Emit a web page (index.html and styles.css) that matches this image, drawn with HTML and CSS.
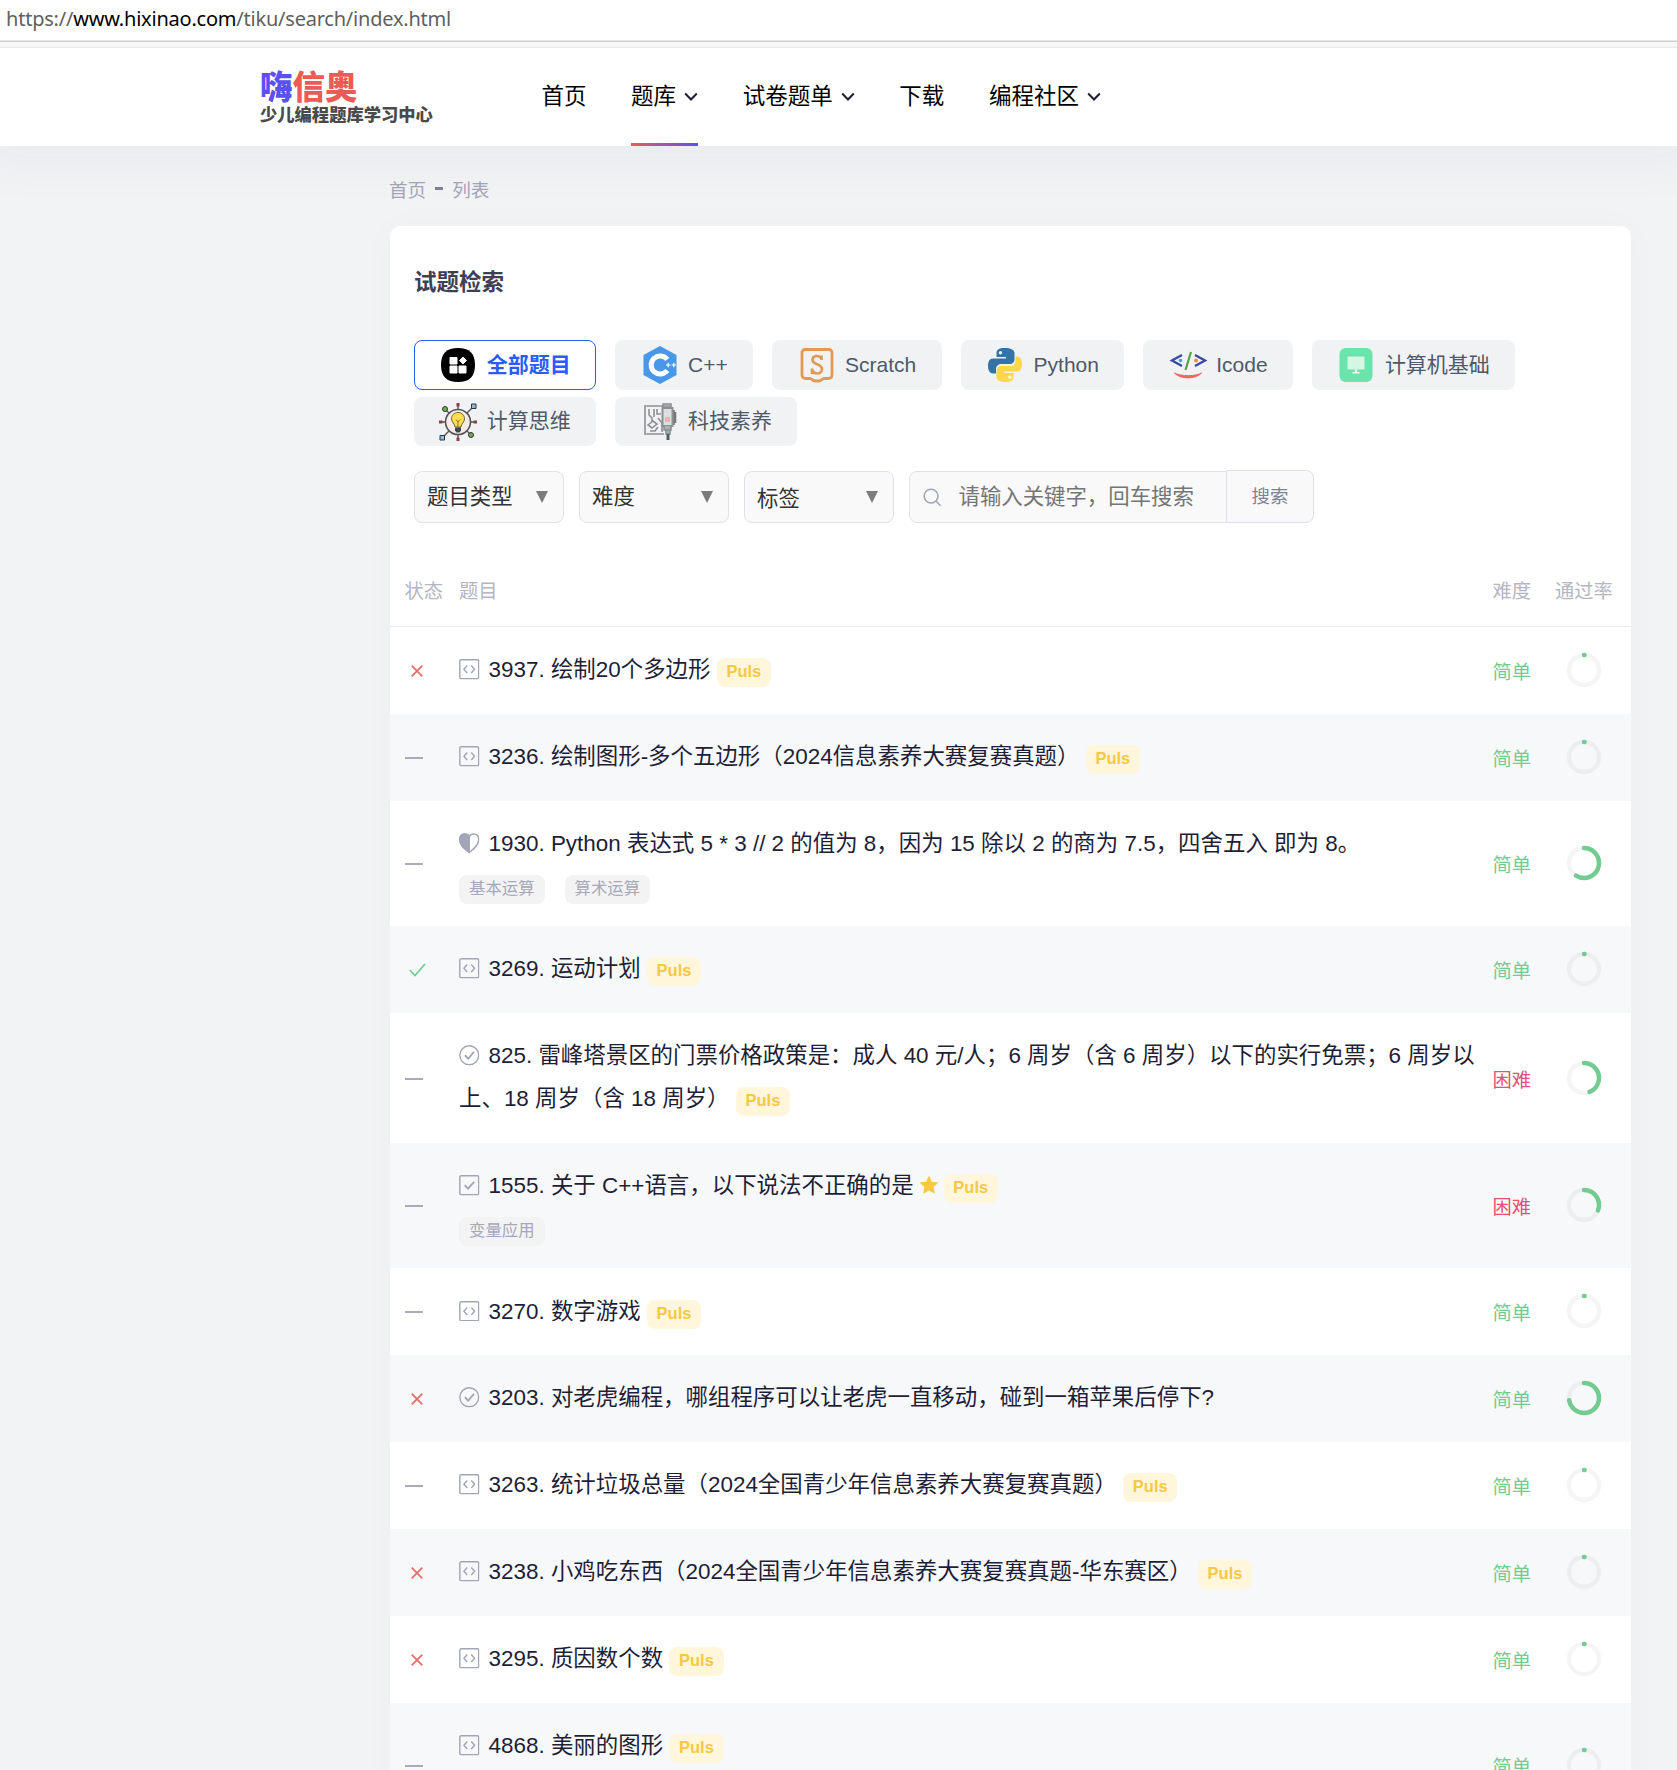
FILE: index.html
```html
<!DOCTYPE html>
<html lang="zh-CN">
<head>
    <meta charset="UTF-8">
    <meta name="viewport" content="width=device-width, initial-scale=1.0">
    <title>试题检索</title>
    <link rel="stylesheet" href="styles.css">
</head>
<body>
    <!-- shared icons -->
    <svg class="sprite">
        <symbol id="code" viewBox="0 0 20 20"><rect x=".8" y=".8" width="18.4" height="18.4" rx="1.2"/><path d="M8 6.3 4.8 10 8 13.7M12 6.3l3.2 3.7-3.2 3.7"/></symbol>
        <symbol id="check-square" viewBox="0 0 20 20"><rect x=".8" y=".8" width="18.4" height="18.4" rx="1.2"/><path d="m5.6 9.8 3.2 3.4 6-6.4" stroke-width="1.8"/></symbol>
        <symbol id="check-circle" viewBox="0 0 20 20"><circle cx="10" cy="10" r="9.2"/><path d="m5.8 10 3.2 3.4 5.6-6.6" stroke-width="1.8"/></symbol>
        <symbol id="heart" viewBox="0 0 20 20"><path d="M10 19C6 15.500.8 12.500.8 6.400.8 2.500 3 1 5.500 1 7.600 1 9.200 2 10 3.400 10.800 2 12.400 1 14.500 1c2.500 0 4.700 1.500 4.700 5.400C19.200 12.500 14 15.500 10 19z"/><path d="M10 19C6 15.500.8 12.500.8 6.400.8 2.500 3 1 5.500 1 7.600 1 9.200 2 10 3.400z" fill="#a1a5b7"/></symbol>
        <symbol id="cross" viewBox="0 0 12 12"><path d="m.7.7 10.600 10.600M11.300.7.7 11.300"/></symbol>
        <symbol id="tick" viewBox="0 0 17 14"><path d="m.8 7 5.200 5.500L16 1"/></symbol>
        <symbol id="down" viewBox="0 0 14 10"><path d="m1.200 1.500 5.800 6 5.800-6"/></symbol>
    </svg>

    <div class="address">https://<b>www.hixinao.com</b>/tiku/search/index.html</div>

    <header class="header">
        <a class="logo" href="#">
            <span class="logo-name"><i>嗨</i>信奥</span>
            <span class="logo-sub">少儿编程题库学习中心</span>
        </a>
        <nav class="nav">
            <a href="#">首页</a>
            <a href="#" class="active">题库<svg><use href="#down"/></svg></a>
            <a href="#">试卷题单<svg><use href="#down"/></svg></a>
            <a href="#">下载</a>
            <a href="#">编程社区<svg><use href="#down"/></svg></a>
        </nav>
    </header>

    <main class="main">
        <div class="breadcrumb"><span>首页</span><i></i><span>列表</span></div>

        <section class="card">
            <h3>试题检索</h3>

            <div class="chips">
                <a class="chip active" href="#">
                    <svg viewBox="0 0 38 38"><path d="M19 2c11.500 0 17 5.500 17 17s-5.500 17-17 17S2 30.500 2 19 7.500 2 19 2z" fill="#000"/><path d="M11 11.500h7V18h-7zM11 20h7v7h-7zM20 20h7v7h-7zM24 11l3.500 3.500-3.500 3.500-3.500-3.500z" fill="#fff" stroke="#fff" stroke-linejoin="round"/></svg>
                    全部题目
                </a>
                <a class="chip" href="#">
                    <svg viewBox="0 0 38 38"><path d="M19 0l16.500 9v20L19 38 2.500 29V9z" fill="#4897e8"/><path d="M26.300 13.500a9 9 0 1 0 0 11" fill="none" stroke="#fff" stroke-width="5"/><path d="M25 19h4.500M27.200 16.800v4.400M30.500 19H35M32.800 16.800v4.400" stroke="#fff" stroke-width="1.200"/></svg>
                    C++
                </a>
                <a class="chip" href="#">
                    <svg viewBox="0 0 38 38" fill="none" stroke="#e09a55"><path d="M7 3.500h24a3 3 0 0 1 3 3v22c0 3-1.500 4-4 4h-4c-2 0-2.500 2.500-5 2.500h-4c-2.500 0-3-2.500-5-2.500H8c-2.500 0-4-1-4-4v-22a3 3 0 0 1 3-3z" stroke-width="2.800"/><path d="M23.500 14V9.500M23.500 13c-1-2-2.500-3-4.500-3-3 0-4.500 1.700-4.500 4 0 5 9.500 3.500 9.500 9 0 2.700-2 4.500-5 4.500-2.500 0-4-1.500-4.500-3.500M14 22.500v5.500" stroke-width="2.700"/></svg>
                    Scratch
                </a>
                <a class="chip" href="#">
                    <svg viewBox="0 0 38 38"><path d="M18.500 2c-6 0-8 2-8 5v4H20v1.500H7c-3.500 0-5 3.500-5 7.500s1.700 7.500 5 7.500h3v-4.500c0-3 2.500-5 5.500-5H24c2.500 0 4.500-2 4.500-4.500V7c0-3-3.500-5-10-5z" fill="#3572a5"/><path d="M19.500 36c6 0 8-2 8-5v-4H18v-1.500h13c3.500 0 5-3.500 5-7.500s-1.700-7.500-5-7.500h-1.500v4.500c0 3-2.500 5-5.500 5h-9c-2.500 0-4.500 2-4.500 4.500V31c0 3 3.500 5 9 5z" fill="#fbd848"/><circle cx="14.500" cy="6.800" r="1.700" fill="#e8f0f6"/><circle cx="24" cy="31.300" r="1.700" fill="#fff8d8"/></svg>
                    Python
                </a>
                <a class="chip" href="#">
                    <svg viewBox="0 0 38 38" fill="none"><path d="M13 9 3 14.500l10 5.500M26 9l10 5.500L26 20" stroke="#3b4ba3" stroke-width="2.400"/><path d="M22 6l-5.500 18" stroke="#5aa04c" stroke-width="2.200"/><circle cx="11.500" cy="14.500" r="1.800" fill="#3ba5d8"/><circle cx="27" cy="14.500" r="2" fill="#f08a3c"/><path d="M5.500 27c6 6.500 21 6.500 27 0-5 3.500-21 3.500-27 0z" fill="#ef6559" stroke="#ef6559" stroke-width="1"/></svg>
                    Icode
                </a>
                <a class="chip" href="#">
                    <svg viewBox="0 0 38 38"><rect x="2.500" y="2" width="33" height="34" rx="6" fill="#69e4ab"/><path d="M10.500 10.500h17v13h-17z" fill="#d2f7e3"/><path d="M18 23.500h2V26h2.500v1.500h-7V26H18z" fill="#eafff4"/></svg>
                    计算机基础
                </a>
                <a class="chip low" href="#">
                    <svg viewBox="0 0 38 38"><path d="M19 1v36M1 19h36M5 5l28 28M35 3 3 35" stroke="#555" stroke-width="1.400"/><circle cx="19" cy="19" r="12.500" fill="#f6ebe6" stroke="#555" stroke-width="1.600"/><path d="M19 9.500c-4 0-6.500 3-6.500 6.300 0 3.500 3.500 5 3.500 8.200h6c0-3.200 3.500-4.700 3.500-8.200 0-3.300-2.500-6.300-6.500-6.300z" fill="#f8df4e" stroke="#6b622f"/><path d="M17 16.500 19 19l2-2.500M19 19v5" fill="none" stroke="#8a7a28"/><path d="M16 24.500h6v3l-1.500 2h-3L16 27.500z" fill="#3c4650"/><g stroke="#333"><circle cx="6" cy="6" r="2.500" fill="#6fb04a"/><circle cx="32" cy="32" r="2.500" fill="#6fb04a"/><path d="M32.500 1h4.500v4.500h-4.500zM1 32.500h4.500V37H1z" fill="#8db8ea"/></g><path d="M17.500 0h3v3.500h-3zM17.500 34.500h3V38h-3zM0 17.500h3.500v3H0zM34.500 17.500H38v3h-3.500z" fill="#8c3f45"/></svg>
                    计算思维
                </a>
                <a class="chip low" href="#">
                    <svg viewBox="0 0 38 38" fill="none" stroke="#8d9092" stroke-width="1.600"><path d="M22 3H4v28h19M8 6v6l3 3v4M13 6v8M16 6v5h4M7 22l5-4 4 3-5 4zM9 28h5l3-4M17 15l4 5v9"/><path d="M22 1h8v3h-8z" fill="#a9b3b7"/><path d="M21.500 5h10v18h-10z" fill="#dcdfe0" stroke-width="2"/><path d="M33 7v15M34.500 9v11" stroke="#777"/><path d="M24 14h5v5h-5z" fill="#e7b4ae" stroke="none"/><path d="M23 23v4h7v-4M25 27v4h4v-4z" fill="#a9b3b7"/><path d="M27 31v6" stroke="#47606a" stroke-width="3"/></svg>
                    科技素养
                </a>
            </div>

            <div class="filters">
                <div class="select"><span>题目类型</span><em></em></div>
                <div class="select"><span>难度</span><em></em></div>
                <div class="select tag-select"><span>标签</span><em></em></div>
                <div class="search">
                    <svg viewBox="0 0 20 20"><circle cx="8.500" cy="8.500" r="7.300"/><path d="m13.800 14 4.700 4.700"/></svg>
                    <input type="text" placeholder="请输入关键字，回车搜索">
                </div>
                <button class="search-btn">搜索</button>
            </div>

            <div class="row head">
                <span>状态</span><span>题目</span><span>难度</span><span>通过率</span>
            </div>

            <div class="row">
                <div class="status"><svg class="cross"><use href="#cross"/></svg></div>
                <div class="title"><svg class="type"><use href="#code"/></svg>3937. 绘制20个多边形 <span class="puls">Puls</span></div>
                <div class="level easy">简单</div>
                <svg class="ring" viewBox="0 0 36 36"><circle cx="18" cy="18" r="15"/><circle class="bar" cx="18" cy="18" r="15" pathLength="100" stroke-dasharray="0.6 200"/></svg>
            </div>
            <div class="row">
                <div class="status"><i></i></div>
                <div class="title"><svg class="type"><use href="#code"/></svg>3236. 绘制图形-多个五边形（2024信息素养大赛复赛真题） <span class="puls">Puls</span></div>
                <div class="level easy">简单</div>
                <svg class="ring" viewBox="0 0 36 36"><circle cx="18" cy="18" r="15"/><circle class="bar" cx="18" cy="18" r="15" pathLength="100" stroke-dasharray="0.6 200"/></svg>
            </div>
            <div class="row">
                <div class="status"><i></i></div>
                <div class="title"><svg class="type"><use href="#heart"/></svg>1930. Python 表达式 5 * 3 // 2 的值为 8，因为 15 除以 2 的商为 7.5，四舍五入 即为 8。
                    <div class="tags"><span>基本运算</span><span>算术运算</span></div>
                </div>
                <div class="level easy">简单</div>
                <svg class="ring" viewBox="0 0 36 36"><circle cx="18" cy="18" r="15"/><circle class="bar" cx="18" cy="18" r="15" pathLength="100" stroke-dasharray="59 200"/></svg>
            </div>
            <div class="row">
                <div class="status"><svg class="tick"><use href="#tick"/></svg></div>
                <div class="title"><svg class="type"><use href="#code"/></svg>3269. 运动计划 <span class="puls">Puls</span></div>
                <div class="level easy">简单</div>
                <svg class="ring" viewBox="0 0 36 36"><circle cx="18" cy="18" r="15"/><circle class="bar" cx="18" cy="18" r="15" pathLength="100" stroke-dasharray="0.6 200"/></svg>
            </div>
            <div class="row">
                <div class="status"><i></i></div>
                <div class="title"><svg class="type"><use href="#check-circle"/></svg>825. 雷峰塔景区的门票价格政策是：成人 40 元/人；6 周岁（含 6 周岁）以下的实行免票；6 周岁以上、18 周岁（含 18 周岁） <span class="puls">Puls</span></div>
                <div class="level hard">困难</div>
                <svg class="ring" viewBox="0 0 36 36"><circle cx="18" cy="18" r="15"/><circle class="bar" cx="18" cy="18" r="15" pathLength="100" stroke-dasharray="44 200"/></svg>
            </div>
            <div class="row">
                <div class="status"><i></i></div>
                <div class="title"><svg class="type"><use href="#check-square"/></svg>1555. 关于 C++语言，以下说法不正确的是<svg class="star" viewBox="0 0 20 20"><path d="m10 .5 2.900 6.200 6.600.8-4.900 4.600 1.300 6.700L10 15.500l-5.900 3.300 1.300-6.700L.5 7.500l6.600-.8z"/></svg><span class="puls">Puls</span>
                    <div class="tags"><span>变量应用</span></div>
                </div>
                <div class="level hard">困难</div>
                <svg class="ring" viewBox="0 0 36 36"><circle cx="18" cy="18" r="15"/><circle class="bar" cx="18" cy="18" r="15" pathLength="100" stroke-dasharray="31 200"/></svg>
            </div>
            <div class="row">
                <div class="status"><i></i></div>
                <div class="title"><svg class="type"><use href="#code"/></svg>3270. 数字游戏 <span class="puls">Puls</span></div>
                <div class="level easy">简单</div>
                <svg class="ring" viewBox="0 0 36 36"><circle cx="18" cy="18" r="15"/><circle class="bar" cx="18" cy="18" r="15" pathLength="100" stroke-dasharray="0.6 200"/></svg>
            </div>
            <div class="row">
                <div class="status"><svg class="cross"><use href="#cross"/></svg></div>
                <div class="title"><svg class="type"><use href="#check-circle"/></svg>3203. 对老虎编程，哪组程序可以让老虎一直移动，碰到一箱苹果后停下?</div>
                <div class="level easy">简单</div>
                <svg class="ring" viewBox="0 0 36 36"><circle cx="18" cy="18" r="15"/><circle class="bar" cx="18" cy="18" r="15" pathLength="100" stroke-dasharray="72.5 200"/></svg>
            </div>
            <div class="row">
                <div class="status"><i></i></div>
                <div class="title"><svg class="type"><use href="#code"/></svg>3263. 统计垃圾总量（2024全国青少年信息素养大赛复赛真题） <span class="puls">Puls</span></div>
                <div class="level easy">简单</div>
                <svg class="ring" viewBox="0 0 36 36"><circle cx="18" cy="18" r="15"/><circle class="bar" cx="18" cy="18" r="15" pathLength="100" stroke-dasharray="0.6 200"/></svg>
            </div>
            <div class="row">
                <div class="status"><svg class="cross"><use href="#cross"/></svg></div>
                <div class="title"><svg class="type"><use href="#code"/></svg>3238. 小鸡吃东西（2024全国青少年信息素养大赛复赛真题-华东赛区） <span class="puls">Puls</span></div>
                <div class="level easy">简单</div>
                <svg class="ring" viewBox="0 0 36 36"><circle cx="18" cy="18" r="15"/><circle class="bar" cx="18" cy="18" r="15" pathLength="100" stroke-dasharray="0.6 200"/></svg>
            </div>
            <div class="row">
                <div class="status"><svg class="cross"><use href="#cross"/></svg></div>
                <div class="title"><svg class="type"><use href="#code"/></svg>3295. 质因数个数 <span class="puls">Puls</span></div>
                <div class="level easy">简单</div>
                <svg class="ring" viewBox="0 0 36 36"><circle cx="18" cy="18" r="15"/><circle class="bar" cx="18" cy="18" r="15" pathLength="100" stroke-dasharray="0.6 200"/></svg>
            </div>
            <div class="row">
                <div class="status"><i></i></div>
                <div class="title"><svg class="type"><use href="#code"/></svg>4868. 美丽的图形 <span class="puls">Puls</span>
                    <div class="tags"></div>
                </div>
                <div class="level easy">简单</div>
                <svg class="ring" viewBox="0 0 36 36"><circle cx="18" cy="18" r="15"/><circle class="bar" cx="18" cy="18" r="15" pathLength="100" stroke-dasharray="0.6 200"/></svg>
            </div>
        </section>
    </main>
</body>
</html>
```

FILE: styles.css
```css
* {
    box-sizing: border-box;
}

body {
    margin: 0;
    height: 1770px;
    overflow: hidden;
    background: #f1f3f5;
    color: #1e1e37;
    font-family: "Liberation Sans", "Noto Sans CJK SC", sans-serif;
}

a {
    color: inherit;
    text-decoration: none;
}

i, em {
    font-style: normal;
}

.sprite {
    position: absolute;
    width: 0;
    height: 0;
}

/* address bar */
.address {
    height: 48px;
    padding-left: 6px;
    background: linear-gradient(#fff 40px, #e6e6e6 40px, #e6e6e6 41px, #cfcfcf 41px, #cfcfcf 42px, #f6f6f6 42px, #f6f6f6 47px, #e8e8e8 47px);
    color: #606060;
    font: 20px/38px "Noto Sans", sans-serif;
    letter-spacing: -0.22px;
}

.address b {
    color: #000;
    font-weight: normal;
}

/* header */
.header {
    position: relative;
    display: flex;
    height: 98px;
    padding-left: 260px;
    background: #fff;
    box-shadow: 0 -20px 60px 30px rgba(40, 40, 70, 0.05);
    clip-path: inset(0 0 -120px 0);
}

.logo {
    width: 281.5px;
    padding-top: 22px;
}

.logo span {
    display: block;
    font-weight: 900;
    white-space: nowrap;
}

.logo-name {
    font-size: 32.5px;
    line-height: 36px;
    color: #ec5b56;
}

.logo-name i {
    color: #5b50f5;
}

.logo-sub {
    font-size: 17.3px;
    line-height: 20px;
    margin-top: -1px;
    color: #4a4a4a;
}

.nav {
    display: flex;
    gap: 44.6px;
    font-size: 22.5px;
    line-height: 96px;
    color: #000;
}

.nav a {
    display: flex;
    align-items: center;
}

.nav svg {
    width: 14px;
    height: 10px;
    margin-left: 8px;
    fill: none;
    stroke: #1e1e37;
    stroke-width: 2;
}

.nav .active {
    background: linear-gradient(90deg, #ec5b56, #5b50f5) bottom / 100% 3px no-repeat;
}

.main {
    width: 1241px;
    margin-left: 390px;
}

.breadcrumb {
    display: flex;
    align-items: center;
    height: 80px;
    margin-left: -1px;
    padding-top: 4px;
    font-size: 18.6px;
    color: #a5a5b8;
}

.breadcrumb i {
    width: 8px;
    height: 3px;
    margin: 0 9px;
    background: #7e7e96;
}

/* card */
.card {
    background: #fff;
    border-radius: 10px;
    box-shadow: 0 0 38px rgba(82, 63, 105, 0.025);
}

.card h3 {
    margin: 0;
    padding: 40px 24px 0;
    font-size: 22.5px;
    line-height: 34px;
    color: #3f3f54;
}

.chips {
    display: flex;
    flex-wrap: wrap;
    gap: 7px 19.2px;
    padding: 40px 24px 0;
}

.chip {
    display: flex;
    align-items: center;
    height: 50px;
    padding: 0 25.3px;
    border-radius: 8px;
    background: #f1f2f4;
    color: #4e5969;
    font-size: 21px;
    line-height: 48px;
}

.chip svg {
    width: 38px;
    height: 38px;
    margin-right: 9.5px;
}

.chip.low {
    height: 49px;
    padding-bottom: 2px;
    line-height: 46px;
}

.chip.low svg {
    margin-top: 2px;
}

.chip.active {
    padding: 0 24.3px;
    border: 1px solid #2b5cf7;
    background: #fff;
    color: #2b5cf7;
    font-weight: bold;
}

.filters {
    display: flex;
    align-items: flex-end;
    height: 77px;
    padding-left: 24px;
}

.select {
    display: flex;
    justify-content: space-between;
    align-items: center;
    width: 150px;
    height: 52px;
    margin-right: 15px;
    padding: 0 15.5px 0 12px;
    border: 1px solid #e1e1e8;
    border-radius: 8px;
    background: #f9f9f9;
    color: #333;
    font-size: 21.4px;
    line-height: 48px;
}

.select span {
    padding-bottom: 1px;
}

.tag-select span {
    padding: 4px 0 0;
}

.select em {
    border: 6px solid transparent;
    border-top: 12px solid #7c7c7c;
    border-bottom: 0;
}

.search {
    display: flex;
    align-items: center;
    width: 318px;
    height: 52px;
    padding-left: 12.5px;
    border: 1px solid #e1e1e8;
    border-radius: 8px 0 0 8px;
    background: #f9f9f9;
}

.search svg {
    width: 19px;
    height: 19px;
    fill: none;
    stroke: #a1a5b7;
    stroke-width: 1.6;
}

.search input {
    width: 260px;
    margin-left: 17px;
    padding: 0;
    border: 0;
    background: none;
    font: 21.4px "Liberation Sans", "Noto Sans CJK SC", sans-serif;
}

.search input::placeholder {
    color: #757575;
}

.search-btn {
    width: 88px;
    height: 53px;
    margin-left: -1px;
    padding: 0 0 3px;
    border: 1px solid #dfdfe9;
    border-radius: 0 8px 8px 0;
    background: #f9f9fa;
    color: #7e8299;
    font: 18.4px "Liberation Sans", "Noto Sans CJK SC", sans-serif;
}

/* problem list */
.row {
    display: grid;
    grid-template-columns: 54.5px 1fr 62.5px 58px;
    align-items: center;
    padding: 21.85px 18px 21.85px 14.500px;
}

.row:nth-of-type(even) {
    background: #fff;
}

.row:nth-of-type(odd) {
    background: #f7f8fa;
}

.row.head {
    height: 104px;
    padding-top: 57px;
    border-bottom: 1px solid #e8e9ec;
    background: #fff;
    color: #b5b5c3;
    font-size: 19.3px;
    line-height: 24px;
    white-space: nowrap;
}

.status {
    display: flex;
    padding-top: 1px;
}

.status i {
    width: 18px;
    height: 2px;
    background: #a9abba;
}

.status svg {
    fill: none;
    stroke-width: 1.7;
}

.status .cross {
    width: 12px;
    height: 12px;
    margin-left: 6px;
    stroke: #ea6a66;
}

.status .tick {
    width: 17px;
    height: 14px;
    margin-left: 4px;
    stroke: #6fcb90;
}

.title {
    margin: -0.6px 0 0.6px;
    padding-right: 14px;
    font-size: 22.44px;
    line-height: 43.2px;
}

.type {
    width: 20.5px;
    height: 20.5px;
    margin-right: 9px;
    vertical-align: -2.5px;
    fill: none;
    stroke: #a1a5b7;
    stroke-width: 1.4;
}

.star {
    width: 20px;
    height: 20px;
    margin: 0 5px;
    vertical-align: -2px;
    fill: #f7c844;
}

.puls {
    display: inline-block;
    height: 29px;
    padding: 0 9.7px;
    border-radius: 8px;
    background: #fff6dc;
    color: #f7c844;
    font-size: 16.5px;
    font-weight: bold;
    line-height: 27px;
}

.tags {
    display: flex;
    gap: 20px;
    height: 38.4px;
    padding-top: 9.4px;
}

.tags span {
    height: 29px;
    padding: 0 10px;
    border-radius: 8px;
    background: #f3f3f4;
    color: #a5a8ba;
    font-size: 16.4px;
    line-height: 26px;
}

.level {
    padding-top: 1.4px;
    font-size: 19.3px;
}

.easy {
    color: #74cb91;
}

.hard {
    color: #e4516f;
}

.ring {
    width: 36px;
    height: 36px;
    margin: -1px 0 0 11px;
    fill: none;
    stroke: rgba(0, 0, 0, 0.04);
    stroke-width: 4.5;
}

.ring .bar {
    stroke: #74cb91;
    stroke-linecap: round;
    transform: rotate(-90deg);
    transform-origin: center;
}
```
